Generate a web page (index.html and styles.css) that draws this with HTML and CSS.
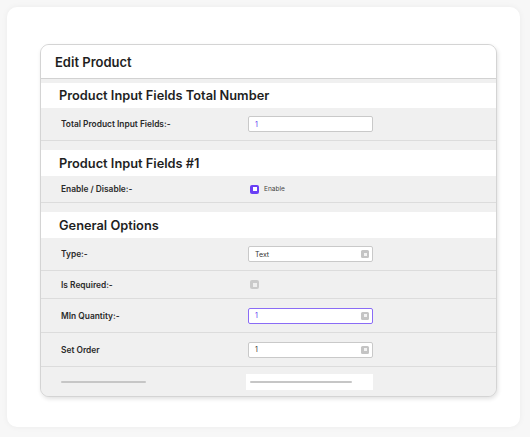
FILE: index.html
```html
<!DOCTYPE html>
<html>
<head>
<meta charset="utf-8">
<link rel="stylesheet" href="styles.css">
</head>
<body>
<div class="card">
  <div class="panel">
    <div class="panel-head">Edit Product</div>
    <div class="gap gap-sm"></div>
    <div class="sec-title t25">Product Input Fields Total Number</div>
    <div class="row h33">
      <div class="label">Total Product Input Fields:-</div>
      <div class="field"><div class="input"><span class="val purple">1</span></div></div>
    </div>
    <div class="gap"></div>
    <div class="sec-title">Product Input Fields #1</div>
    <div class="row h27">
      <div class="label">Enable / Disable:-</div>
      <div class="field"><span class="check on"></span><span class="check-label">Enable</span></div>
    </div>
    <div class="gap"></div>
    <div class="sec-title">General Options</div>
    <div class="row h33">
      <div class="label">Type:-</div>
      <div class="field"><div class="input"><span class="val">Text</span><span class="spin"></span></div></div>
    </div>
    <div class="row h28">
      <div class="label">Is Required:-</div>
      <div class="field"><span class="check off"></span></div>
    </div>
    <div class="row h34">
      <div class="label">MIn Quantity:-</div>
      <div class="field"><div class="input focus"><span class="val purple">1</span><span class="spin"></span></div></div>
    </div>
    <div class="row h34">
      <div class="label">Set Order</div>
      <div class="field"><div class="input"><span class="val">1</span><span class="spin"></span></div></div>
    </div>
    <div class="row last">
      <div class="label"><span class="bar bar-l"></span></div>
      <div class="field"><div class="ghost"><span class="bar bar-r"></span></div></div>
    </div>
  </div>
</div>
</body>
</html>
```
FILE: styles.css
```css
* { box-sizing: border-box; }
html, body { margin: 0; padding: 0; }
body {
  background: #f7f7f7;
  font-family: "Inter", "DejaVu Sans", sans-serif;
  color: #2a2a2a;
  width: 530px;
  height: 437px;
  padding: 7px;
}
.card {
  width: 513px;
  height: 420px;
  background: #ffffff;
  border-radius: 10px;
  box-shadow: 0 0 6px rgba(0, 0, 0, 0.05);
  padding: 37px 23px 30px 33px;
}
.panel {
  width: 457px;
  height: 353px;
  border: 1px solid #d4d4d4;
  border-radius: 9px;
  background: #f0f0f0;
  overflow: hidden;
  box-shadow: 1px 2px 4px rgba(0, 0, 0, 0.12);
}
.panel-head {
  height: 34px;
  background: #fff;
  border-bottom: 1px solid #d2d2d2;
  display: flex;
  align-items: center;
  padding-left: 14px;
  font-size: 13px;
  font-weight: 600;
  color: #1f1f1f;
}
.gap { height: 9px; background: #f0f0f0; }
.gap-sm { height: 4px; }
.sec-title {
  height: 26px;
  background: #fff;
  display: flex;
  align-items: center;
  padding-left: 18px;
  font-size: 12.8px;
  font-weight: 600;
  color: #1f1f1f;
}
.sec-title.t25 { height: 25px; }
.row {
  display: grid;
  grid-template-columns: 187px 1fr;
  align-items: center;
  padding-left: 20px;
  border-bottom: 1px solid #dcdcdc;
  background: #f0f0f0;
}
.h27 { height: 27px; }
.h28 { height: 28px; }
.h33 { height: 33px; }
.h34 { height: 34px; }
.row.last { height: 30px; border-bottom: none; }
.label {
  font-size: 8.4px;
  font-weight: 600;
  color: #2a2a2a;
}
.field { display: flex; align-items: center; }
.input {
  width: 125px;
  height: 16px;
  background: #fff;
  border: 1px solid #c9c9c9;
  border-radius: 2px;
  display: flex;
  align-items: center;
  justify-content: space-between;
  padding: 0 3px 0 6px;
}
.input.focus { border-color: #8a6cf6; }
.val { font-size: 7px; color: #333; }
.val.purple { color: #5a3cf0; }
.spin {
  width: 8px;
  height: 8px;
  border-radius: 1.5px;
  background: #c4c4c4;
  display: flex;
  align-items: center;
  justify-content: center;
}
.spin::after {
  content: "";
  width: 3px;
  height: 3px;
  background: #f3f3f3;
}
.check {
  width: 9px;
  height: 9px;
  border-radius: 2px;
  margin-left: 2px;
  display: inline-flex;
  align-items: center;
  justify-content: center;
}
.check::after {
  content: "";
  width: 4px;
  height: 4px;
  background: #fff;
}
.check.on { background: #6a3ff5; }
.check.off { background: #cacaca; }
.check.off::after { background: #efefef; }
.check-label {
  font-size: 6.5px;
  color: #444;
  margin-left: 5px;
}
.bar {
  display: block;
  height: 2px;
  background: #c6c6c6;
  border-radius: 1px;
}
.bar-l { width: 85px; }
.ghost {
  width: 127px;
  height: 16px;
  margin-left: -2px;
  background: #fff;
  display: flex;
  align-items: center;
  padding-left: 4px;
}
.bar-r { width: 102px; }
```
